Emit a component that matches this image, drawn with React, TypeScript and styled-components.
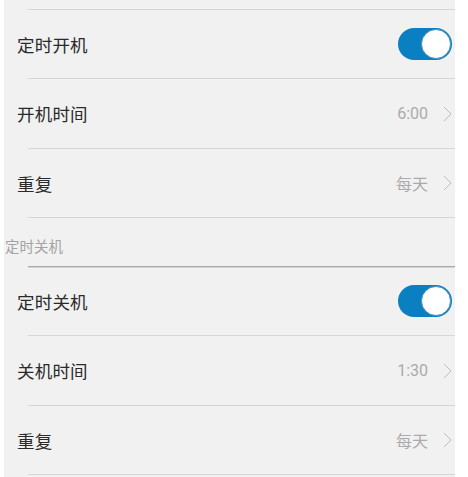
import React from "react";
import styled, { createGlobalStyle } from "styled-components";

const GlobalStyle = createGlobalStyle`
  html, body {
    margin: 0;
    padding: 0;
    background: #ffffff;
  }
  body {
    font-family: "Noto Sans CJK SC", "Noto Sans", sans-serif;
  }
`;

const Page = styled.div`
  width: 468px;
  height: 477px;
  overflow: hidden;
  padding-left: 4px;
  box-sizing: border-box;
  background: #ffffff;
`;

const Panel = styled.div`
  width: 451px;
  height: 100%;
  background: #f1f1f1;
  display: flex;
  flex-direction: column;
`;

const TopGap = styled.div`
  height: 9px;
  flex-shrink: 0;
`;

const Divider = styled.div<{ strong?: boolean }>`
  height: 1px;
  margin-left: 24px;
  background: ${({ strong }) => (strong ? "#ababab" : "#d6d6d6")};
  box-shadow: ${({ strong }) => (strong ? "0 1px 0 #d2d2d2" : "none")};
  flex-shrink: 0;
`;

const Row = styled.div<{ tall?: boolean }>`
  height: ${({ tall }) => (tall ? "69px" : "68px")};
  flex-shrink: 0;
  display: flex;
  align-items: center;
  justify-content: space-between;
  padding: 0 3px 0 13px;
`;

const Label = styled.span`
  font-size: 17.5px;
  color: #2a2a2a;
  letter-spacing: 0.2px;
`;

const Right = styled.div`
  display: flex;
  align-items: center;
  gap: 15px;
`;

const Value = styled.span`
  font-family: "Roboto", "Noto Sans CJK SC", sans-serif;
  font-size: 16px;
  color: #ababab;
`;

const SectionHeader = styled.div`
  height: 48px;
  flex-shrink: 0;
  display: flex;
  align-items: center;
  padding: 6px 0 0 1px;
  box-sizing: border-box;
  font-size: 14.5px;
  color: #a3a3a3;
`;

const Track = styled.div`
  width: 54px;
  height: 32px;
  border-radius: 16px;
  background: #0a7fc2;
  display: flex;
  align-items: center;
  justify-content: flex-end;
  padding: 1px;
  box-sizing: border-box;
`;

const Knob = styled.div`
  width: 30px;
  height: 30px;
  border-radius: 50%;
  background: #ffffff;
  box-sizing: border-box;
  border: 1.5px solid #4a8fb3;
`;

const Chevron = () => (
  <svg width="9" height="16" viewBox="0 0 9 16">
    <polyline
      points="1,1 8,8 1,15"
      fill="none"
      stroke="#bdbdbd"
      strokeWidth="1"
    />
  </svg>
);

const Toggle = () => (
  <Track>
    <Knob />
  </Track>
);

const ValueRow: React.FC<{ label: string; value: string; tall?: boolean }> = ({
  label,
  value,
  tall,
}) => (
  <Row tall={tall}>
    <Label>{label}</Label>
    <Right>
      <Value>{value}</Value>
      <Chevron />
    </Right>
  </Row>
);

const ToggleRow: React.FC<{ label: string }> = ({ label }) => (
  <Row>
    <Label>{label}</Label>
    <Toggle />
  </Row>
);

export default function App() {
  return (
    <Page>
      <GlobalStyle />
      <Panel>
        <TopGap />
        <Divider />
        <ToggleRow label="定时开机" />
        <Divider />
        <ValueRow label="开机时间" value="6:00" tall />
        <Divider />
        <ValueRow label="重复" value="每天" />
        <Divider />
        <SectionHeader>定时关机</SectionHeader>
        <Divider strong />
        <ToggleRow label="定时关机" />
        <Divider />
        <ValueRow label="关机时间" value="1:30" tall />
        <Divider />
        <ValueRow label="重复" value="每天" />
        <Divider />
      </Panel>
    </Page>
  );
}
